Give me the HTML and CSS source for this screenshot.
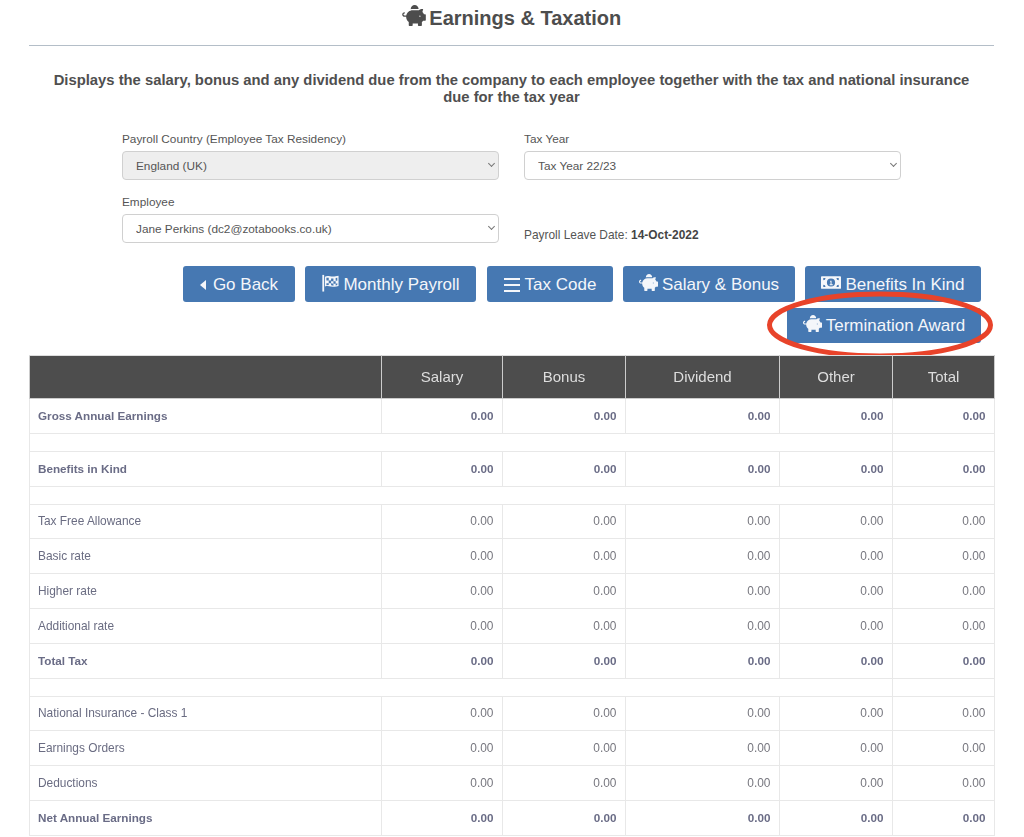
FILE: index.html
```html
<!DOCTYPE html>
<html>
  <head>
    <meta charset="UTF-8">
    <title>Earnings &amp; Taxation</title>
    <link rel="stylesheet" href="styles.css">
  </head>
  <body>
    <svg class="icon-defs" width="0" height="0">
      <symbol id="icon-piggy" viewBox="0 0 576 512">
        <path d="M560 224h-29.5c-8.8-20-21.6-37.7-37.4-52.5L512 96h-32c-29.4 0-55.4 13.5-73 34.3-7.6-1.1-15.1-2.3-23-2.3H256c-77.4 0-141.9 55-156.8 128H56c-14.8 0-26.5-13.5-23.5-28.8C34.7 215.8 45.4 208 57 208h1c3.3 0 6-2.7 6-6v-20c0-3.3-2.7-6-6-6-28.5 0-53.9 20.4-57.5 48.6C-3.9 258.8 22.7 288 56 288h40c0 52.2 25.4 98.1 64 127.3V496c0 8.8 7.2 16 16 16h64c8.8 0 16-7.2 16-16v-48h128v48c0 8.8 7.2 16 16 16h64c8.8 0 16-7.2 16-16v-80.7c11.8-8.9 22.3-19.4 31.3-31.3H560c8.8 0 16-7.2 16-16V240c0-8.8-7.2-16-16-16zm-128 64c-8.8 0-16-7.2-16-16s7.2-16 16-16 16 7.2 16 16-7.2 16-16 16zM256 96h128c5.4 0 10.7.4 15.9.8 0-.3.1-.5.1-.8 0-53-43-96-96-96s-96 43-96 96c0 2.1.5 4.1.6 6.2 15.2-3.9 31-6.2 47.4-6.2z"/>
      </symbol>
      <symbol id="icon-flag" viewBox="0 0 20 20">
        <path d="M1.500 1h2v18.500h-2z"/>
        <path fill-rule="evenodd" d="M4.400 3C8 1 11 4.200 19.500 2v11.400c-6.500 2.400-10.500-1.600-15.100.4zM6 4.300v2.900h2.600V4.300zM11.200 5v3h2.600V5zM16.300 4.500v3h1.800V4.300zM8.600 7.200v3h2.600v-3zM13.800 8v2.800h2.500V8zM6 10.200v2.300l2.600-.2v-2.100zM11.200 10.200v2.400l2.600.4v-2.200zM16.300 10.800v2l1.800-.5v-1.900z"/>
      </symbol>
      <symbol id="icon-money" viewBox="0 0 22 16">
        <path fill-rule="evenodd" d="M1 1h20a1 1 0 0 1 1 1v12a1 1 0 0 1-1 1H1a1 1 0 0 1-1-1V2a1 1 0 0 1 1-1zM2.500 3v2.500A2.500 2.500 0 0 0 5 3zM17 3a2.500 2.500 0 0 0 2.500 2.500V3zM2.500 10.500V13H5a2.500 2.500 0 0 0-2.500-2.500zM19.500 10.500A2.500 2.500 0 0 0 17 13h2.500zM11 3.500a4.500 4.500 0 1 0 0 9 4.500 4.500 0 0 0 0-9z"/>
        <path d="M10 6h1.600v4H13v1H9.500v-1h1V7.200H10z"/>
      </symbol>
    </svg>

    <div class="page">
      <h1 class="page-title">
        <svg class="title-icon"><use href="#icon-piggy"/></svg>
        Earnings &amp; Taxation
      </h1>
      <hr class="title-rule">
      <p class="intro">Displays the salary, bonus and any dividend due from the company to each employee together with the tax and national insurance due for the tax year</p>

      <div class="filters">
        <div class="field">
          <label>Payroll Country (Employee Tax Residency)</label>
          <div class="select-wrap">
            <select disabled><option>England (UK)</option></select>
          </div>
        </div>
        <div class="field">
          <label>Tax Year</label>
          <div class="select-wrap">
            <select><option>Tax Year 22/23</option></select>
          </div>
        </div>
        <div class="field">
          <label>Employee</label>
          <div class="select-wrap">
            <select><option>Jane Perkins (dc2@zotabooks.co.uk)</option></select>
          </div>
        </div>
        <div class="field leave-date">Payroll Leave Date: <b>14-Oct-2022</b></div>
      </div>

      <div class="actions">
        <a class="btn btn-back"><span class="caret"></span>Go Back</a>
        <a class="btn btn-monthly"><svg class="btn-icon flag"><use href="#icon-flag"/></svg>Monthly Payroll</a>
        <a class="btn btn-taxcode"><span class="bars"><i></i><i></i><i></i></span>Tax Code</a>
        <a class="btn btn-salary"><svg class="btn-icon"><use href="#icon-piggy"/></svg>Salary &amp; Bonus</a>
        <a class="btn btn-benefits"><svg class="btn-icon money"><use href="#icon-money"/></svg>Benefits In Kind</a>
        <a class="btn btn-termination"><svg class="btn-icon"><use href="#icon-piggy"/></svg>Termination Award</a>
        <svg class="highlight" viewBox="0 0 228 68"><ellipse cx="114" cy="34" rx="110.500" ry="31"/></svg>
      </div>

      <table class="earnings">
        <colgroup>
          <col class="col-name"><col class="col-salary"><col class="col-bonus"><col class="col-dividend"><col class="col-other"><col class="col-total">
        </colgroup>
        <thead>
          <tr><th></th><th>Salary</th><th>Bonus</th><th>Dividend</th><th>Other</th><th>Total</th></tr>
        </thead>
        <tbody>
          <tr class="strong"><td>Gross Annual Earnings</td><td>0.00</td><td>0.00</td><td>0.00</td><td>0.00</td><td>0.00</td></tr>
          <tr class="spacer"><td colspan="5"></td><td></td></tr>
          <tr class="strong"><td>Benefits in Kind</td><td>0.00</td><td>0.00</td><td>0.00</td><td>0.00</td><td>0.00</td></tr>
          <tr class="spacer"><td colspan="5"></td><td></td></tr>
          <tr><td>Tax Free Allowance</td><td>0.00</td><td>0.00</td><td>0.00</td><td>0.00</td><td>0.00</td></tr>
          <tr><td>Basic rate</td><td>0.00</td><td>0.00</td><td>0.00</td><td>0.00</td><td>0.00</td></tr>
          <tr><td>Higher rate</td><td>0.00</td><td>0.00</td><td>0.00</td><td>0.00</td><td>0.00</td></tr>
          <tr><td>Additional rate</td><td>0.00</td><td>0.00</td><td>0.00</td><td>0.00</td><td>0.00</td></tr>
          <tr class="strong"><td>Total Tax</td><td>0.00</td><td>0.00</td><td>0.00</td><td>0.00</td><td>0.00</td></tr>
          <tr class="spacer"><td colspan="5"></td><td></td></tr>
          <tr><td>National Insurance - Class 1</td><td>0.00</td><td>0.00</td><td>0.00</td><td>0.00</td><td>0.00</td></tr>
          <tr><td>Earnings Orders</td><td>0.00</td><td>0.00</td><td>0.00</td><td>0.00</td><td>0.00</td></tr>
          <tr><td>Deductions</td><td>0.00</td><td>0.00</td><td>0.00</td><td>0.00</td><td>0.00</td></tr>
          <tr class="strong"><td>Net Annual Earnings</td><td>0.00</td><td>0.00</td><td>0.00</td><td>0.00</td><td>0.00</td></tr>
        </tbody>
      </table>
    </div>
  </body>
</html>
```

FILE: styles.css
```css
html, body {
  height: 837px;
  overflow: hidden;
}
body {
  margin: 0;
  background: #fff;
  color: #555;
  font-family: "Liberation Sans", Arial, sans-serif;
}
.icon-defs {
  position: absolute;
}
.page {
  padding: 0 30px 0 29px;
}

.page-title {
  margin: 0;
  padding: 5px 0 0 0;
  height: 39px;
  box-sizing: border-box;
  text-align: center;
  font-size: 20px;
  line-height: 24px;
  font-weight: bold;
  color: #4d4d4d;
}
.title-icon {
  width: 24px;
  height: 21px;
  fill: #4d4d4d;
  vertical-align: -1px;
  margin-right: -2px;
}
.title-rule {
  margin: 6px 0 0 0;
  border: none;
  border-top: 1px solid #b4bec8;
}
.intro {
  margin: 26px 0 0 0;
  padding: 0 20px;
  text-align: center;
  font-size: 14.800px;
  line-height: 16.500px;
  font-weight: bold;
  color: #4f4f4f;
}

.filters {
  display: grid;
  grid-template-columns: 377px 377px;
  column-gap: 25px;
  row-gap: 15px;
  margin: 27px 0 0 93px;
}
.field label {
  display: block;
  font-size: 11.800px;
  line-height: 14px;
  margin-bottom: 5px;
}
.select-wrap {
  position: relative;
}
.select-wrap:after {
  content: "";
  position: absolute;
  right: 5px;
  top: 10px;
  width: 4px;
  height: 4px;
  border-right: 1px solid #777;
  border-bottom: 1px solid #777;
  transform: rotate(45deg);
}
.select-wrap select {
  display: block;
  width: 100%;
  height: 29px;
  padding: 0 0 0 13px;
  appearance: none;
  background: #fff;
  border: 1px solid #d0d0d0;
  border-radius: 4px;
  color: #555;
  opacity: 1;
  font-family: inherit;
  font-size: 11.800px;
}
.select-wrap select:disabled {
  background: #eee;
}
.leave-date {
  align-self: end;
  padding-bottom: 1px;
  font-size: 11.900px;
  line-height: 14px;
}
.leave-date b {
  color: #444;
}

.actions {
  position: relative;
  display: flex;
  flex-wrap: wrap;
  justify-content: flex-end;
  gap: 6px 10px;
  margin: 23px 13px 0 0;
}
.btn {
  display: flex;
  align-items: center;
  justify-content: center;
  box-sizing: border-box;
  height: 36px;
  padding-top: 1px;
  background: #4678b2;
  border-radius: 3px;
  color: #f4f6fa;
  font-size: 17px;
}
.btn-back { width: 112px; }
.btn-monthly { width: 171px; margin-right: 1px; }
.btn-taxcode { width: 126px; }
.btn-salary { width: 172px; }
.btn-benefits { width: 176px; }
.btn-termination { width: 194px; height: 35px; padding-top: 0; }
.btn-icon {
  width: 19px;
  height: 17px;
  fill: #f4f6fa;
  margin-right: 4px;
  margin-top: -4px;
}
.btn-icon.flag {
  width: 18px;
  height: 18px;
}
.btn-icon.money {
  width: 20px;
  height: 15px;
}
.caret {
  width: 0;
  height: 0;
  border-top: 5px solid transparent;
  border-bottom: 5px solid transparent;
  border-right: 6px solid #f4f6fa;
  margin-right: 7px;
}
.bars {
  display: flex;
  flex-direction: column;
  gap: 4px;
  width: 16px;
  margin-right: 5px;
}
.bars i {
  display: block;
  height: 2px;
  background: #f4f6fa;
}
.highlight {
  position: absolute;
  right: -13px;
  top: 25px;
  width: 228px;
  height: 68px;
  fill: none;
  stroke: #e8432a;
  stroke-width: 5;
  pointer-events: none;
}

.earnings {
  width: 965px;
  table-layout: fixed;
  border-collapse: collapse;
  margin-top: 12px;
  font-size: 11.900px;
  will-change: transform;
}
.col-name { width: 352px; }
.col-salary { width: 121px; }
.col-bonus { width: 123px; }
.col-dividend { width: 154px; }
.col-other { width: 113px; }
.col-total { width: 102px; }
.earnings th {
  box-sizing: border-box;
  height: 43px;
  padding: 0 0 2px 0;
  background: #4d4d4d;
  border: 1px solid #ccc;
  border-top-color: #ddd;
  color: #ddd;
  font-size: 15px;
  font-weight: normal;
  text-align: center;
}
.earnings td {
  box-sizing: border-box;
  height: 34.800px;
  padding: 0 8.500px 0 8px;
  border: 1px solid #e8e8e8;
  text-align: right;
  color: #77777f;
}
.earnings td:first-child {
  text-align: left;
  color: #6a6c82;
}
.earnings .strong td {
  font-size: 11.700px;
  font-weight: bold;
  color: #6a6c86;
}
.earnings .spacer td {
  height: 18px;
  padding: 0;
}
```
